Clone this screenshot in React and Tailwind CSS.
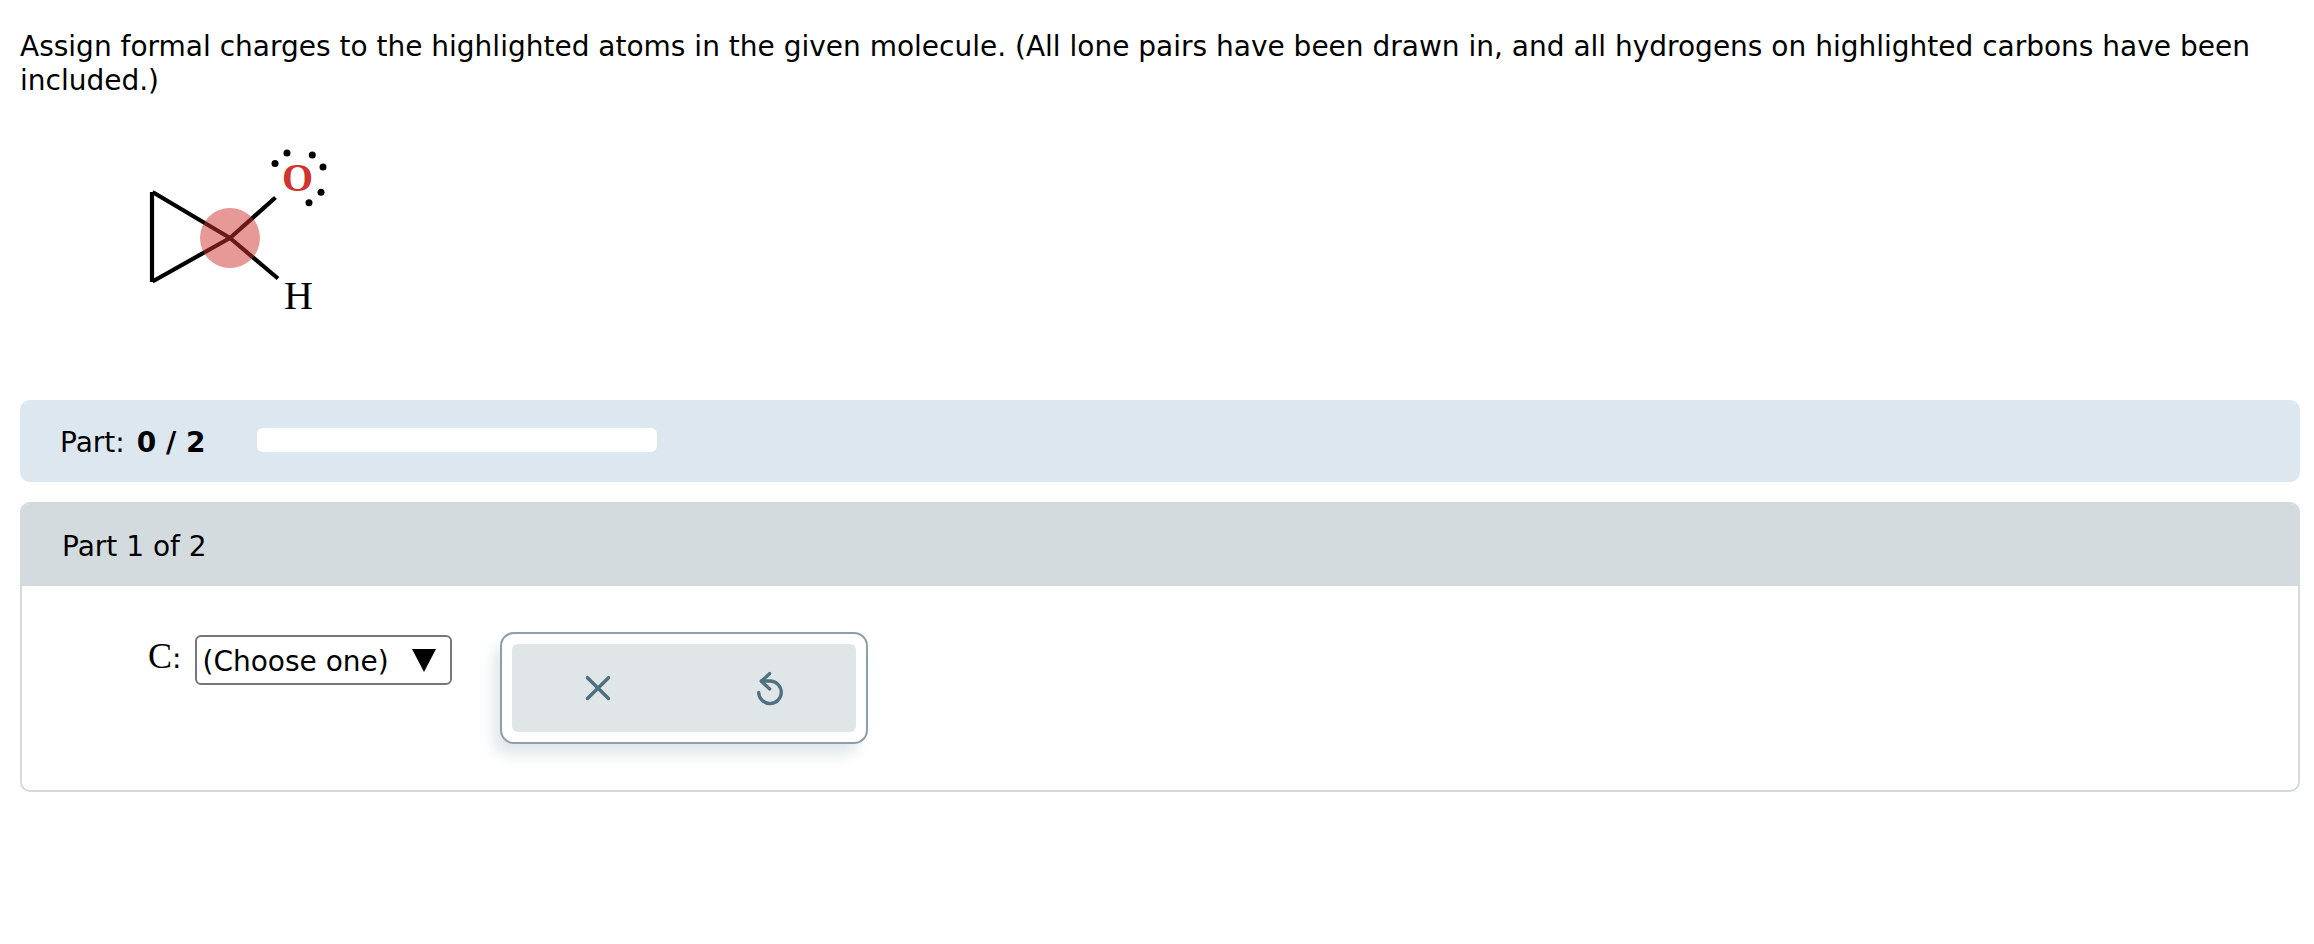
function Molecule() {
  return (
    <svg
      className="block"
      width="220"
      height="200"
      viewBox="130 130 220 200"
      role="img"
      aria-label="Cyclopropane ring with an oxygen and a hydrogen on the highlighted carbon"
    >
      <g stroke="#000" strokeWidth="4.200" fill="none">
        <path d="M152 192V282" />
        <path d="M152.500 192L230 238" />
        <path d="M152.500 281.500L230 238" />
        <path d="M230 238L275.500 197.500" />
        <path d="M230 238L278 278.500" />
      </g>
      <circle cx="230" cy="238" r="30" fill="#d0342f" fillOpacity="0.5" />
      <g fill="#000">
        <circle cx="287" cy="153" r="3.500" />
        <circle cx="275" cy="163.500" r="3.500" />
        <circle cx="312.300" cy="155" r="3.500" />
        <circle cx="323" cy="167" r="3.500" />
        <circle cx="321" cy="192.300" r="3.500" />
        <circle cx="309" cy="202.700" r="3.500" />
      </g>
      <text
        x="297.500"
        y="191"
        textAnchor="middle"
        fill="#d0342f"
        className="font-['Liberation_Serif',serif] text-[40px] font-bold"
      >
        O
      </text>
      <text
        x="298.500"
        y="309"
        textAnchor="middle"
        fill="#000"
        className="font-['Liberation_Serif',serif] text-[40px]"
      >
        H
      </text>
    </svg>
  );
}

function ClearIcon() {
  return (
    <svg width="32" height="40" viewBox="0 0 32 40" fill="none" stroke="#4f707e" strokeWidth="3.500" strokeLinecap="round" aria-hidden="true">
      <path d="M5.500 9.700L26.500 30.500M26.500 9.700L5.500 30.500" />
    </svg>
  );
}

function UndoIcon() {
  return (
    <svg width="32" height="40" viewBox="0 0 32 40" fill="none" stroke="#4f707e" strokeWidth="3.300" strokeLinecap="round" strokeLinejoin="round" aria-hidden="true">
      <path d="M15.700 5.500L7.300 13.300L15.700 21" />
      <path d="M7.300 13L16 13A11.300 11.300 0 1 1 4.700 24.300" />
    </svg>
  );
}

export default function App() {
  return (
    <main className="bg-white pl-5 pr-3.5 pt-[30px] pb-10 font-['DejaVu_Sans',Verdana,sans-serif] text-[28px] leading-[34px] text-black">
      <p>
        Assign formal charges to the highlighted atoms in the given molecule. (All lone pairs have
        been drawn in, and all hydrogens on highlighted carbons have been included.)
      </p>

      <div className="pt-8 pb-[70px] pl-[110px]">
        <Molecule />
      </div>

      <section className="flex h-[82px] items-center gap-10 rounded-[10px] bg-[#dce7f0] px-10">
        <div className="flex min-w-[157px] gap-3 pt-1">
          <span>Part:</span>
          <strong className="font-bold">0 / 2</strong>
        </div>
        <div
          role="progressbar"
          aria-label="Parts completed"
          aria-valuemin={0}
          aria-valuemax={2}
          aria-valuenow={0}
          className="mb-[2px] h-6 w-[400px] rounded-md bg-white"
        />
      </section>

      <section className="mt-5 overflow-hidden rounded-[10px] border-2 border-[#d3dbde]">
        <h2 className="bg-[#d3dbde] px-10 pt-[26px] pb-[22px] font-normal">Part 1 of 2</h2>
        <div className="flex items-start pt-[46px] pb-[46px] pl-[126px]">
          <div className="flex items-start gap-3.5 pt-[3px]">
            <label htmlFor="carbon-charge" className="pt-1">
              <span className="font-['Liberation_Serif',serif] text-[36px]">C</span>:
            </label>
            <div className="relative">
              <select
                id="carbon-charge"
                className="block h-[50px] w-[257px] appearance-none rounded-md border-2 border-[#767676] bg-white pl-[5px] pt-1 text-black"
              >
                <option>(Choose one)</option>
                <option>-2</option>
                <option>-1</option>
                <option>0</option>
                <option>+1</option>
                <option>+2</option>
              </select>
              <svg
                className="pointer-events-none absolute right-4 top-3.5"
                width="24"
                height="23"
                viewBox="0 0 24 23"
                aria-hidden="true"
              >
                <path d="M0 0H24L12 23Z" fill="#000" />
              </svg>
            </div>
          </div>

          <div className="ml-12 rounded-[14px] border-2 border-[#8aa1ab] bg-white p-2.5 shadow-[-8px_12px_16px_-2px_#dfe6e8]">
            <div className="flex h-[88px] w-[344px] rounded-md bg-[#e0e6e8]">
              <button type="button" aria-label="Clear" className="flex flex-1 items-center justify-center">
                <ClearIcon />
              </button>
              <button type="button" aria-label="Undo" className="flex flex-1 items-center justify-center">
                <UndoIcon />
              </button>
            </div>
          </div>
        </div>
      </section>
    </main>
  );
}
